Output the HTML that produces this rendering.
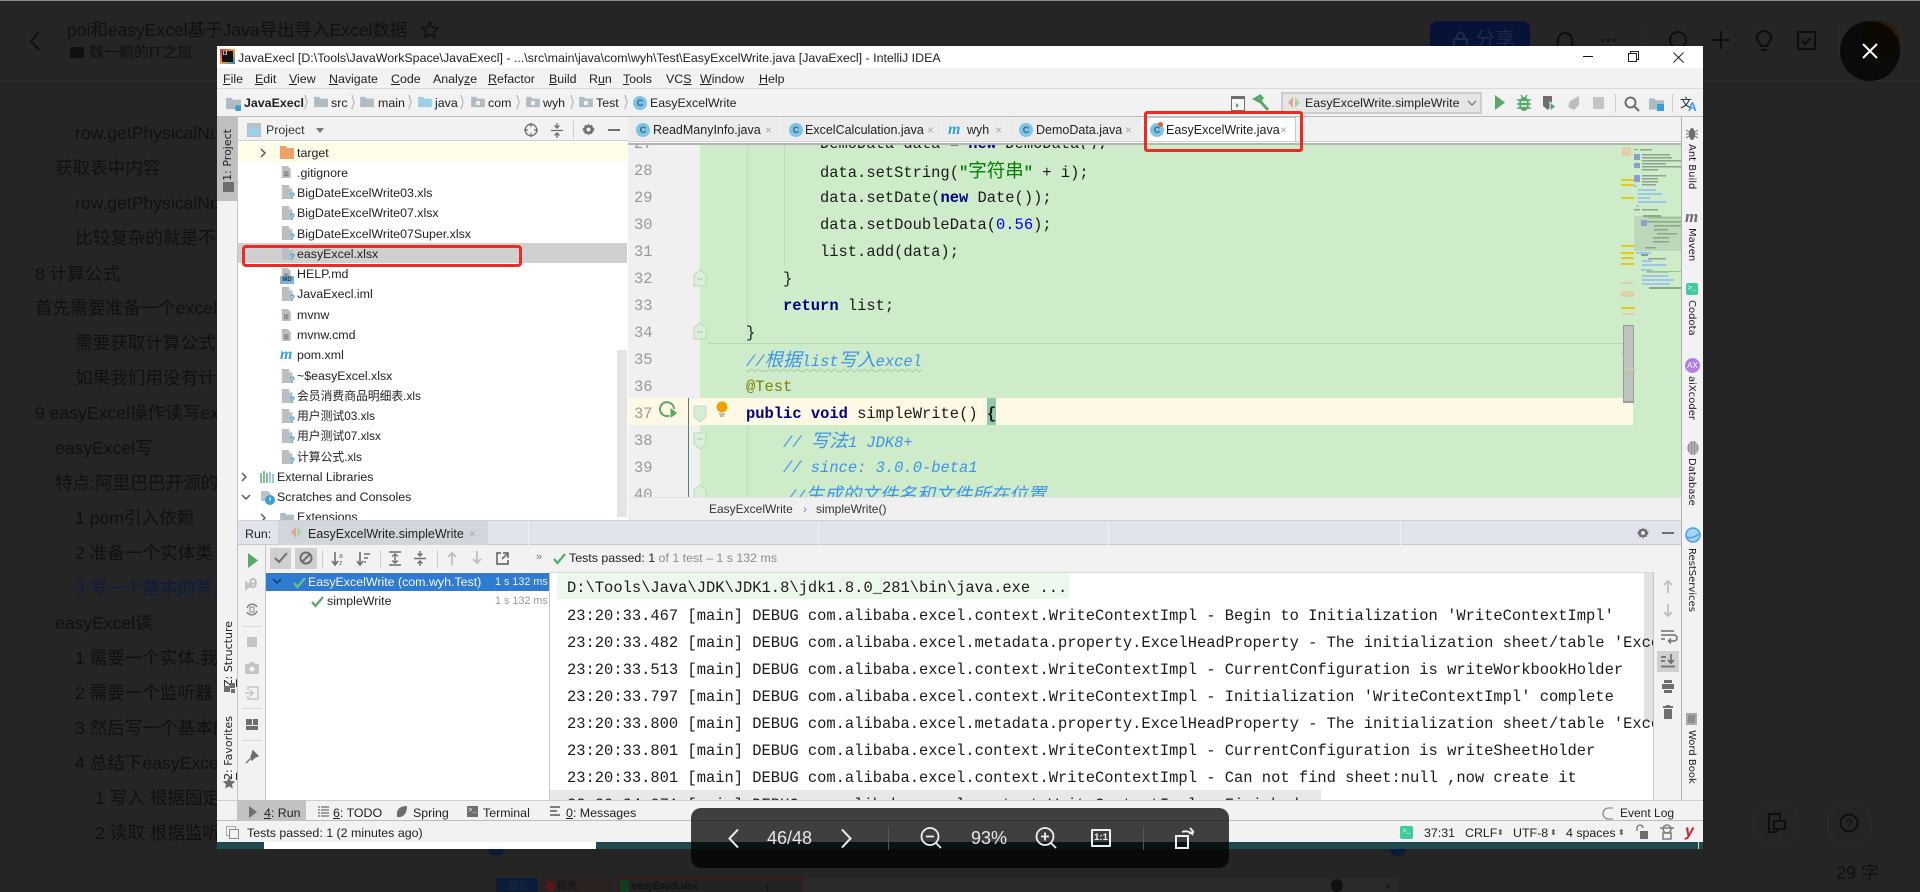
<!DOCTYPE html>
<html lang="zh"><head><meta charset="utf-8"><title>IntelliJ IDEA</title>
<style>
*{box-sizing:border-box;margin:0;padding:0}
html,body{width:1920px;height:892px;overflow:hidden;background:#252525}
body{position:relative;font-family:"Liberation Sans","Noto Sans CJK SC",sans-serif;filter:blur(.35px)}
.a,.b,.t,.m,.v,.r{position:absolute}
.t{white-space:nowrap;line-height:20px;font-size:12.4px;color:#222}
.m{white-space:pre;line-height:20px;font-size:15.45px;font-family:"Liberation Mono","Noto Sans CJK SC",monospace;color:#1a1a1a}
.n{position:absolute;left:634px;font-family:"Liberation Mono",monospace;font-size:15.45px;line-height:20px;color:#999}
.v{white-space:nowrap;writing-mode:vertical-rl;font-family:"DejaVu Sans",sans-serif;font-size:10px;color:#222;line-height:14px}
.r{transform:rotate(180deg);font-size:11px}
.bg{position:absolute;white-space:nowrap;font-size:17.6px;line-height:24px;color:#101010}
.k{color:#000080;font-weight:bold}.c{color:#3f94ea;font-style:italic}
.z{font-size:18.5px;font-family:"Noto Sans CJK SC",sans-serif;line-height:1;font-weight:normal}
u{text-decoration-thickness:1px;text-underline-offset:1px}
.x{font-size:12px;color:#aaa;font-family:"Liberation Sans",sans-serif}
.cl{position:absolute;width:14px;height:14px;border-radius:50%;background:#7cc4e8;color:#37617a;font:bold 9px/14px "Liberation Sans",sans-serif;text-align:center}
.sb{position:absolute;width:1px;background:#cfcfcf}
svg{overflow:visible}
</style></head><body>
<svg width="0" height="0" style="position:absolute"><defs>
<symbol id="f" viewBox="0 0 16 18"><path d="M1 1h8l4 4v12H1z" fill="#b9bfc4"/><path d="M9 1v4h4" fill="#e8e8e8"/><text x="10" y="17" font-size="10" font-weight="bold" fill="#389fd6" font-family="Liberation Sans">?</text></symbol>
<symbol id="d" viewBox="0 0 16 18"><path d="M1 1h8l4 4v12H1z" fill="#b9bfc4"/><path d="M4 9h6M4 11.500h6M4 14h6" stroke="#555" stroke-width="1"/></symbol>
<symbol id="fo" viewBox="0 0 16 14"><path d="M0 1h6l1 2h9v10H0z" fill="#b0bcc4"/></symbol>
<symbol id="g" viewBox="0 0 16 16"><path d="M8 1.500l1.300 2.200 2.500-.6.600 2.500 2.200 1.300-1.300 1.100 1.300 1.100-2.200 1.300-.6 2.500-2.500-.6L8 14.500l-1.300-2.200-2.500.6-.6-2.500-2.200-1.300L2.700 8 1.400 6.900l2.200-1.300.6-2.500 2.500.6z" fill="#6e6e6e"/><circle cx="8" cy="8" r="2.200" fill="#f2f2f2"/></symbol>
</defs></svg>

<!-- underlying page -->
<div class="b" style="left:0;top:0;width:1920px;height:1px;background:#8a8a8a"></div>
<div class="b" style="left:0;top:80px;width:1920px;height:1px;background:#2c2c2c"></div>
<svg class="a" style="left:28px;top:30px" width="14" height="22" viewBox="0 0 14 22"><path d="M11 2L3 11l8 9" fill="none" stroke="#101010" stroke-width="2"/></svg>
<div class="bg" style="left:67px;top:18px;font-size:17.5px">poi和easyExcel基于Java导出导入Excel数据</div>
<svg class="a" style="left:421px;top:21px" width="18" height="18" viewBox="0 0 18 18"><path d="M9 1l2.400 5.300 5.600.6-4.200 3.800 1.200 5.600L9 13.400l-5 2.900 1.200-5.600L1 6.900l5.600-.6z" fill="none" stroke="#101010" stroke-width="1.500"/></svg>
<div class="b" style="left:70px;top:47px;width:14px;height:11px;background:#101010;border-radius:1px"></div>
<div class="bg" style="left:89px;top:42px;font-size:15px;line-height:22px">魏一鹤的IT之旅</div>
<div class="b" style="left:1430px;top:21px;width:100px;height:40px;background:#061337;border-radius:8px"></div>
<div class="bg" style="left:1475px;top:28px;color:#1e2a47;font-size:20px">分享</div>
<svg class="a" style="left:1452px;top:32px" width="17" height="17" viewBox="0 0 17 17"><rect x="2" y="7" width="13" height="9" rx="1" fill="none" stroke="#1e2a47" stroke-width="2"/><path d="M5 7V4a3.500 3.500 0 017 0v3" fill="none" stroke="#1e2a47" stroke-width="2"/></svg>
<svg class="a" style="left:1553px;top:30px" width="24" height="20" viewBox="0 0 24 20"><path d="M3 18c2-2 2-5 2-8a7 7 0 0114 0c0 3 0 6 2 8z" fill="none" stroke="#0e0e0e" stroke-width="2"/></svg>
<div class="bg" style="left:1600px;top:28px;font-weight:bold">···</div>
<svg class="a" style="left:1668px;top:30px" width="20" height="20"><circle cx="10" cy="10" r="8" fill="none" stroke="#0e0e0e" stroke-width="2"/></svg>
<svg class="a" style="left:1711px;top:30px" width="20" height="20"><path d="M10 1v18M1 10h18" stroke="#0e0e0e" stroke-width="2"/></svg>
<svg class="a" style="left:1755px;top:30px" width="18" height="22" viewBox="0 0 18 22"><path d="M6 16c0-3-4-4-4-8a7 7 0 0114 0c0 4-4 5-4 8zM6 20h6" fill="none" stroke="#0e0e0e" stroke-width="2"/></svg>
<svg class="a" style="left:1797px;top:31px" width="20" height="20"><rect x="1" y="1" width="17" height="17" fill="none" stroke="#0e0e0e" stroke-width="2"/><path d="M5 10l3 3 6-6" fill="none" stroke="#0e0e0e" stroke-width="2"/></svg>
<div class="b" style="left:1645px;top:22px;width:1px;height:36px;background:#2c2c2c"></div>
<div class="b" style="left:1839px;top:22px;width:1px;height:36px;background:#2c2c2c"></div>
<div class="b" style="left:1861px;top:21px;width:39px;height:39px;border-radius:50%;background:#2a1c06"></div>

<div class="bg" style="left:75px;top:121px">row.getPhysicalNumberOfCells()</div>
<div class="bg" style="left:55px;top:156px">获取表中内容</div>
<div class="bg" style="left:75px;top:191px">row.getPhysicalNumberOfCells()</div>
<div class="bg" style="left:75px;top:226px">比较复杂的就是不同类型</div>
<div class="bg" style="left:35px;top:262px">8 计算公式</div>
<div class="bg" style="left:35px;top:296px">首先需要准备一个excel</div>
<div class="bg" style="left:75px;top:331px">需要获取计算公式的</div>
<div class="bg" style="left:75px;top:366px">如果我们用没有计算</div>
<div class="bg" style="left:35px;top:401px">9 easyExcel操作读写excel</div>
<div class="bg" style="left:55px;top:436px">easyExcel写</div>
<div class="bg" style="left:55px;top:471px">特点:阿里巴巴开源的</div>
<div class="bg" style="left:75px;top:506px">1 pom引入依赖</div>
<div class="bg" style="left:75px;top:541px">2 准备一个实体类</div>
<div class="bg" style="left:75px;top:576px;color:#0b1c40">3 写一个基本的写入</div>
<div class="bg" style="left:55px;top:611px">easyExcel读</div>
<div class="bg" style="left:75px;top:646px">1 需要一个实体,我们</div>
<div class="bg" style="left:75px;top:681px">2 需要一个监听器</div>
<div class="bg" style="left:75px;top:716px">3 然后写一个基本的</div>
<div class="bg" style="left:75px;top:751px">4 总结下easyExcel</div>
<div class="bg" style="left:95px;top:786px">1 写入 根据固定类</div>
<div class="bg" style="left:95px;top:821px">2 读取 根据监听器</div>

<div class="b" style="left:1754px;top:801px;width:45px;height:45px;border-radius:50%;border:1px solid #2c2c2c"></div>
<div class="b" style="left:1827px;top:801px;width:45px;height:45px;border-radius:50%;border:1px solid #2c2c2c"></div>
<svg class="a" style="left:1767px;top:812px" width="20" height="22" viewBox="0 0 20 22"><path d="M9 20H2V2h11v5" fill="none" stroke="#0e0e0e" stroke-width="2"/><path d="M7 9h11v8h-6l-2 2v-2H7z" fill="none" stroke="#0e0e0e" stroke-width="2"/></svg>
<svg class="a" style="left:1839px;top:813px" width="20" height="20"><circle cx="10" cy="10" r="8.500" fill="none" stroke="#0e0e0e" stroke-width="2"/><text x="10" y="15" font-size="13" text-anchor="middle" fill="#0e0e0e" font-family="Liberation Sans">?</text></svg>
<div class="bg" style="left:1836px;top:861px;font-size:18px">29 字</div>

<div class="b" style="left:496px;top:878px;width:42px;height:14px;background:#0c1c38"></div>
<div class="t" style="left:508px;top:877px;color:#1c2c48;font-size:10px">首页</div>
<div class="b" style="left:541px;top:878px;width:71px;height:14px;background:#2a2121"></div>
<div class="b" style="left:546px;top:881px;width:9px;height:10px;border-radius:50%;background:#5c1414"></div>
<div class="t" style="left:557px;top:877px;color:#141414;font-size:10px">稻壳</div>
<div class="b" style="left:616px;top:878px;width:187px;height:14px;border:1px solid #4e1414;border-bottom:0;background:#232323"></div>
<div class="b" style="left:620px;top:881px;width:9px;height:11px;background:#123e20"></div>
<div class="t" style="left:632px;top:877px;color:#0c0c0c;font-size:10px">easyExcel.xlsx</div>
<div class="t" style="left:764px;top:877px;color:#151515;font-size:12px">+</div>
<div class="b" style="left:803px;top:878px;width:595px;height:14px;background:#2a2a2a"></div>
<div class="b" style="left:1331px;top:879px;width:12px;height:13px;border-radius:50%;background:#111"></div>
<div class="t" style="left:1385px;top:877px;color:#111;font-size:11px">×</div>

<!-- IDE window -->
<div class="b" style="left:217px;top:46px;width:1486px;height:803px;background:#f2f2f2;overflow:hidden"></div>
<div class="b" style="left:217px;top:46px;width:1486px;height:22px;background:#fff"></div>
<div class="b" style="left:217px;top:88px;width:1486px;height:1px;background:#dcdcdc"></div>
<div class="b" style="left:217px;top:116px;width:1486px;height:1px;background:#bdbdbd"></div>

<!-- title -->
<div class="b" style="left:220px;top:49px;width:15px;height:15px;background:linear-gradient(135deg,#d8315a,#f5a623 50%,#1e88e5);"></div>
<div class="b" style="left:222px;top:51px;width:11px;height:11px;background:#111;color:#fff;font:bold 5px/6px 'Liberation Sans';padding-left:1px">IJ</div>
<div class="t" style="left:238px;top:48px;font-size:12.4px">JavaExecl [D:\Tools\JavaWorkSpace\JavaExecl] - ...\src\main\java\com\wyh\Test\EasyExcelWrite.java [JavaExecl] - IntelliJ IDEA</div>
<div class="b" style="left:1583px;top:56px;width:10px;height:1px;background:#111"></div>
<svg class="a" style="left:1628px;top:51px" width="11" height="11"><path d="M2.500 2.500V.5h8v8h-2M.5 2.500h8v8h-8z" fill="none" stroke="#222"/></svg>
<svg class="a" style="left:1673px;top:52px" width="11" height="11"><path d="M.5.5l10 10M10.500.5l-10 10" stroke="#222"/></svg>

<!-- menu -->
<div class="t" style="left:223px;top:69px"><u>F</u>ile</div>
<div class="t" style="left:255px;top:69px"><u>E</u>dit</div>
<div class="t" style="left:289px;top:69px"><u>V</u>iew</div>
<div class="t" style="left:329px;top:69px"><u>N</u>avigate</div>
<div class="t" style="left:391px;top:69px"><u>C</u>ode</div>
<div class="t" style="left:433px;top:69px">Analy<u>z</u>e</div>
<div class="t" style="left:488px;top:69px"><u>R</u>efactor</div>
<div class="t" style="left:549px;top:69px"><u>B</u>uild</div>
<div class="t" style="left:589px;top:69px">R<u>u</u>n</div>
<div class="t" style="left:623px;top:69px"><u>T</u>ools</div>
<div class="t" style="left:666px;top:69px">VC<u>S</u></div>
<div class="t" style="left:700px;top:69px"><u>W</u>indow</div>
<div class="t" style="left:759px;top:69px"><u>H</u>elp</div>

<!-- nav bar -->
<svg class="a" style="left:226px;top:96px" width="15" height="15" viewBox="0 0 16 16"><use href="#fo"/><rect x="10" y="10" width="6" height="6" fill="#389fd6"/></svg>
<div class="t" style="left:244px;top:93px;font-weight:bold">JavaExecl</div>
<div class="t" style="left:303px;top:93px;color:#bbb;font-size:16px">⟩</div>
<svg class="a" style="left:314px;top:96px" width="14" height="12"><use href="#fo"/></svg>
<div class="t" style="left:331px;top:93px">src</div>
<div class="t" style="left:350px;top:93px;color:#bbb;font-size:16px">⟩</div>
<svg class="a" style="left:360px;top:96px" width="14" height="12"><use href="#fo"/></svg>
<div class="t" style="left:378px;top:93px">main</div>
<div class="t" style="left:407px;top:93px;color:#bbb;font-size:16px">⟩</div>
<svg class="a" style="left:418px;top:96px" width="14" height="12" viewBox="0 0 16 14"><path d="M0 1h6l1 2h9v10H0z" fill="#9ccfe8"/></svg>
<div class="t" style="left:435px;top:93px">java</div>
<div class="t" style="left:459px;top:93px;color:#bbb;font-size:16px">⟩</div>
<svg class="a" style="left:471px;top:96px" width="14" height="12"><use href="#fo"/><rect x="5" y="5" width="4" height="4" fill="#f2f2f2"/></svg>
<div class="t" style="left:488px;top:93px">com</div>
<div class="t" style="left:515px;top:93px;color:#bbb;font-size:16px">⟩</div>
<svg class="a" style="left:526px;top:96px" width="14" height="12"><use href="#fo"/><rect x="5" y="5" width="4" height="4" fill="#f2f2f2"/></svg>
<div class="t" style="left:543px;top:93px">wyh</div>
<div class="t" style="left:569px;top:93px;color:#bbb;font-size:16px">⟩</div>
<svg class="a" style="left:579px;top:96px" width="14" height="12"><use href="#fo"/><rect x="5" y="5" width="4" height="4" fill="#f2f2f2"/></svg>
<div class="t" style="left:596px;top:93px">Test</div>
<div class="t" style="left:623px;top:93px;color:#bbb;font-size:16px">⟩</div>
<div class="cl" style="left:633px;top:96px">C</div>
<div class="t" style="left:650px;top:93px">EasyExcelWrite</div>

<svg class="a" style="left:1231px;top:96px" width="14" height="15"><rect x=".5" y=".5" width="13" height="14" fill="#f6f6f6" stroke="#6e6e6e"/><rect x="0" y="0" width="14" height="3" fill="#6e6e6e"/><path d="M5 7l3 2.500L5 12z" fill="#59a869"/></svg>
<svg class="a" style="left:1254px;top:95px" width="16" height="17" viewBox="0 0 16 17"><path d="M1 4l5-3 2 2-3 3zM6 6l8 9" fill="none" stroke="#59a869" stroke-width="3"/></svg>
<div class="b" style="left:1281px;top:92px;width:201px;height:22px;background:#e6e6e6;border:2px solid #cdcdcd"></div>
<div class="b" style="left:1288px;top:97px;width:5px;height:11px;background:#e8a090;clip-path:polygon(100% 0,0 50%,100% 100%)"></div>
<div class="b" style="left:1295px;top:97px;width:5px;height:11px;background:#a8d5a8;clip-path:polygon(0 0,100% 50%,0 100%)"></div>
<div class="t" style="left:1305px;top:93px">EasyExcelWrite.simpleWrite</div>
<svg class="a" style="left:1467px;top:100px" width="10" height="7"><path d="M1 1l4 4 4-4" fill="none" stroke="#6e6e6e" stroke-width="1.200"/></svg>
<svg class="a" style="left:1494px;top:94px" width="12" height="17"><path d="M1 1l10 7.500L1 16z" fill="#59a869"/></svg>
<svg class="a" style="left:1517px;top:94px" width="14" height="18" viewBox="0 0 14 18"><ellipse cx="7" cy="10" rx="5" ry="7" fill="#59a869"/><path d="M0 6h14M0 10h14M0 14h14M4 1l2 3M10 1L8 4" stroke="#59a869" stroke-width="1.500"/><path d="M4 8h6M4 12h6" stroke="#f2f2f2" stroke-width="1.500"/></svg>
<svg class="a" style="left:1542px;top:95px" width="15" height="17" viewBox="0 0 15 17"><path d="M1 1h9v8l-4 6-5-4z" fill="#6e6e6e"/><path d="M8 7l6 4.500L8 16z" fill="#59a869" stroke="#f2f2f2"/></svg>
<svg class="a" style="left:1567px;top:95px" width="14" height="16"><path d="M3 6l9-5v9l-5 5-6-3z" fill="#bdbdbd"/></svg>
<div class="b" style="left:1593px;top:97px;width:11px;height:12px;background:#c4c4c4"></div>
<div class="sb" style="left:1615px;top:94px;height:19px"></div>
<svg class="a" style="left:1624px;top:96px" width="16" height="16"><circle cx="6.500" cy="6.500" r="5" fill="none" stroke="#6e6e6e" stroke-width="2"/><path d="M10 10l5 5" stroke="#6e6e6e" stroke-width="2.200"/></svg>
<svg class="a" style="left:1649px;top:97px" width="15" height="14"><use href="#fo"/><rect x="8" y="7" width="7" height="7" fill="#389fd6"/></svg>
<div class="sb" style="left:1672px;top:94px;height:19px"></div>
<div class="t" style="left:1680px;top:93px;font-size:12px">文</div>
<div class="t" style="left:1688px;top:97px;color:#3d8fe8;font-size:12px;font-weight:bold">A</div>

<!-- left stripe -->
<div class="b" style="left:217px;top:117px;width:20px;height:84px;background:#bfbfbf"></div>
<div class="b" style="left:237px;top:117px;width:1px;height:683px;background:#c4c4c4"></div>
<div class="v r" style="left:221px;top:129px">1: Project</div>
<div class="b" style="left:223px;top:182px;width:11px;height:10px;background:#6e6e6e"></div>
<div class="v r" style="left:222px;top:621px"><u>Z</u>: Structure</div>
<div class="b" style="left:224px;top:686px;width:6px;height:6px;background:#6e6e6e"></div>
<div class="b" style="left:230px;top:683px;width:5px;height:5px;background:#6e6e6e"></div>
<div class="b" style="left:231px;top:689px;width:4px;height:4px;background:#6e6e6e"></div>
<div class="v r" style="left:222px;top:716px"><u>2</u>: Favorites</div>
<svg class="a" style="left:222px;top:776px" width="14" height="14" viewBox="0 0 18 18"><path d="M9 1l2.400 5.300 5.600.6-4.200 3.800 1.200 5.600L9 13.400l-5 2.900 1.200-5.600L1 6.900l5.600-.6z" fill="#6e6e6e"/></svg>

<!-- project panel -->
<div class="b" style="left:238px;top:117px;width:390px;height:404px;background:#fff;overflow:hidden"></div>
<div class="b" style="left:238px;top:117px;width:390px;height:24px;background:#f2f2f2;border-bottom:1px solid #d0d0d0"></div>
<svg class="a" style="left:247px;top:123px" width="14" height="14"><rect x=".5" y=".5" width="13" height="13" fill="#9ccfe8" stroke="#bdbdbd"/><rect x="1" y="1" width="12" height="3" fill="#bdbdbd"/></svg>
<div class="t" style="left:266px;top:120px;font-size:12.4px;color:#333">Project</div>
<div class="b" style="left:316px;top:128px;width:8px;height:5px;background:#777;clip-path:polygon(0 0,100% 0,50% 100%)"></div>
<svg class="a" style="left:524px;top:123px" width="14" height="14"><circle cx="7" cy="7" r="5.800" fill="none" stroke="#6e6e6e" stroke-width="1.300"/><path d="M7 0v4M7 10v4M0 7h4M10 7h4" stroke="#6e6e6e" stroke-width="1.300"/></svg>
<svg class="a" style="left:551px;top:123px" width="12" height="15"><path d="M0 7.500h12M6 0v5M3.500 2.500L6 5l2.500-2.500M6 15v-5M3.500 12.500L6 10l2.500 2.500" fill="none" stroke="#6e6e6e" stroke-width="1.300"/></svg>
<div class="sb" style="left:573px;top:121px;height:17px"></div>
<svg class="a" style="left:581px;top:122px" width="15" height="15"><use href="#g"/></svg>
<div class="b" style="left:608px;top:129px;width:12px;height:2px;background:#6e6e6e"></div>

<div class="b" style="left:238px;top:142px;width:389px;height:20px;background:#fdfde8"></div>
<div class="b" style="left:238px;top:243px;width:389px;height:20px;background:#d0d0d0"></div>
<svg class="a" style="left:260px;top:148px" width="7" height="10"><path d="M1 1l4 4-4 4" fill="none" stroke="#555" stroke-width="1.400"/></svg>
<svg class="a" style="left:280px;top:146px" width="14" height="13"><path d="M0 0h6l1 2h7v11H0z" fill="#eda26a"/></svg>
<div class="t" style="left:297px;top:143px">target</div>
<svg class="a" style="left:281px;top:164px" width="12" height="16"><use href="#d"/></svg><div class="t" style="left:297px;top:163px">.gitignore</div>
<svg class="a" style="left:281px;top:184px" width="14" height="16"><use href="#f"/></svg><div class="t" style="left:297px;top:183px">BigDateExcelWrite03.xls</div>
<svg class="a" style="left:281px;top:205px" width="14" height="16"><use href="#f"/></svg><div class="t" style="left:297px;top:203px">BigDateExcelWrite07.xlsx</div>
<svg class="a" style="left:281px;top:225px" width="14" height="16"><use href="#f"/></svg><div class="t" style="left:297px;top:224px">BigDateExcelWrite07Super.xlsx</div>
<svg class="a" style="left:281px;top:245px" width="14" height="16"><use href="#f"/></svg><div class="t" style="left:297px;top:244px">easyExcel.xlsx</div>
<svg class="a" style="left:281px;top:266px" width="12" height="16"><use href="#d"/></svg><div class="b" style="left:280px;top:276px;width:14px;height:8px;background:#7fb2d4;color:#234;font:bold 6px/8px 'Liberation Sans';text-align:center">MD</div><div class="t" style="left:297px;top:264px">HELP.md</div>
<svg class="a" style="left:281px;top:286px" width="14" height="16"><use href="#f"/></svg><div class="t" style="left:297px;top:284px">JavaExecl.iml</div>
<svg class="a" style="left:281px;top:307px" width="12" height="16"><use href="#d"/></svg><div class="t" style="left:297px;top:305px">mvnw</div>
<svg class="a" style="left:281px;top:327px" width="12" height="16"><use href="#d"/></svg><div class="t" style="left:297px;top:325px">mvnw.cmd</div>
<div class="t" style="left:280px;top:345px;color:#389fd6;font-style:italic;font-weight:bold;font-size:16px;font-family:'Liberation Serif',serif">m</div><div class="t" style="left:297px;top:345px">pom.xml</div>
<svg class="a" style="left:281px;top:368px" width="14" height="16"><use href="#f"/></svg><div class="t" style="left:297px;top:366px">~$easyExcel.xlsx</div>
<svg class="a" style="left:281px;top:388px" width="14" height="16"><use href="#f"/></svg><div class="t" style="left:297px;top:386px;font-size:11.8px">会员消费商品明细表.xls</div>
<svg class="a" style="left:281px;top:408px" width="14" height="16"><use href="#f"/></svg><div class="t" style="left:297px;top:406px;font-size:11.8px">用户测试03.xls</div>
<svg class="a" style="left:281px;top:428px" width="14" height="16"><use href="#f"/></svg><div class="t" style="left:297px;top:426px;font-size:11.8px">用户测试07.xlsx</div>
<svg class="a" style="left:281px;top:449px" width="14" height="16"><use href="#f"/></svg><div class="t" style="left:297px;top:447px;font-size:11.8px">计算公式.xls</div>
<svg class="a" style="left:241px;top:472px" width="7" height="10"><path d="M1 1l4 4-4 4" fill="none" stroke="#555" stroke-width="1.400"/></svg>
<svg class="a" style="left:260px;top:470px" width="14" height="14"><path d="M1 3v10M4 1v12M7 3v10" stroke="#59a869" stroke-width="1.500"/><path d="M10 2v11M13 4v9" stroke="#7cb8d8" stroke-width="1.500"/></svg>
<div class="t" style="left:277px;top:467px">External Libraries</div>
<svg class="a" style="left:241px;top:494px" width="10" height="7"><path d="M1 1l4 4 4-4" fill="none" stroke="#555" stroke-width="1.400"/></svg>
<svg class="a" style="left:260px;top:490px" width="15" height="15"><path d="M1 1h7l3 3v7H1z" fill="#bcc2c6"/><circle cx="10" cy="10" r="5" fill="#389fd6"/><path d="M10 7v4" stroke="#fff"/></svg>
<div class="t" style="left:277px;top:487px">Scratches and Consoles</div>
<div class="b" style="left:238px;top:512px;width:389px;height:9px;overflow:hidden"><div class="t" style="left:59px;top:-5px">Extensions</div><svg class="a" style="left:22px;top:1px" width="7" height="10"><path d="M1 1l4 4-4 4" fill="none" stroke="#555" stroke-width="1.400"/></svg><svg class="a" style="left:42px;top:0" width="14" height="12"><use href="#fo"/></svg></div>
<div class="b" style="left:617px;top:350px;width:10px;height:167px;background:#e4e4e4"></div>

<!-- editor tabs -->
<div class="b" style="left:628px;top:117px;width:1053px;height:24px;background:#f2f2f2"></div>
<div class="b" style="left:628px;top:117px;width:152px;height:23px;background:#ececec"></div>
<div class="b" style="left:781px;top:117px;width:160px;height:23px;background:#ececec"></div>
<div class="b" style="left:942px;top:117px;width:67px;height:23px;background:#ececec"></div>
<div class="b" style="left:1010px;top:117px;width:130px;height:23px;background:#ececec"></div>
<div class="b" style="left:1144px;top:117px;width:152px;height:24px;background:#fff;border:1px solid #c8c8c8;border-bottom:0"></div>
<div class="b" style="left:628px;top:141px;width:1053px;height:4px;background:#fafafa;border-top:1px solid #cfcfcf;border-bottom:2px solid #b4b4b4"></div>
<div class="cl" style="left:636px;top:123px">C</div><div class="t" style="left:653px;top:120px;font-size:12.5px">ReadManyInfo.java</div><div class="t x" style="left:765px;top:120px">×</div>
<div class="cl" style="left:789px;top:123px">C</div><div class="t" style="left:805px;top:120px;font-size:12.5px">ExcelCalculation.java</div><div class="t x" style="left:927px;top:120px">×</div>
<div class="t" style="left:948px;top:120px;color:#389fd6;font-style:italic;font-weight:bold;font-size:16px;font-family:'Liberation Serif',serif">m</div><div class="t" style="left:967px;top:120px;font-size:12.5px">wyh</div><div class="t x" style="left:995px;top:120px">×</div>
<div class="cl" style="left:1019px;top:123px">C</div><div class="t" style="left:1036px;top:120px;font-size:12.5px">DemoData.java</div><div class="t x" style="left:1125px;top:120px">×</div>
<div class="cl" style="left:1150px;top:123px">C</div><div class="b" style="left:1158px;top:122px;width:5px;height:5px;border-radius:50%;background:#d9683c"></div><div class="t" style="left:1166px;top:120px;font-size:12.5px">EasyExcelWrite.java</div><div class="t x" style="left:1280px;top:120px">×</div>

<!-- editor -->
<div class="b" id="ed" style="left:628px;top:145px;width:1053px;height:352px;background:#ceebca;overflow:hidden">
<div class="b" style="left:0;top:0;width:72px;height:352px;background:#f0f0f0"></div>
<div class="b" style="left:0;top:253px;width:1005px;height:27px;background:#fef9e4"></div>
<div class="b" style="left:359px;top:253px;width:9px;height:27px;background:#93c7b0"></div>
<div class="b" style="left:80px;top:198px;width:925px;height:1px;background:#b8d4b5"></div>
<div class="b" style="left:60px;top:253px;width:1px;height:99px;background:#4f8273"></div>
<div class="b" style="left:119px;top:0;width:1px;height:190px;background:#bfddbc"></div>
<div class="b" style="left:119px;top:280px;width:1px;height:72px;background:#bfddbc"></div>
<div class="b" style="left:156px;top:0;width:1px;height:120px;background:#bfddbc"></div>
</div>
<!-- fold marks -->
<svg class="a" style="left:693px;top:269px" width="15" height="18"><path d="M1 6l6-5 6 5v11H1z" fill="#dbf0d8" stroke="#bcd8b9"/><path d="M4 10h6" stroke="#a8c4a6"/></svg>
<svg class="a" style="left:693px;top:322px" width="15" height="18"><path d="M1 6l6-5 6 5v11H1z" fill="#dbf0d8" stroke="#bcd8b9"/><path d="M4 10h6" stroke="#a8c4a6"/></svg>
<svg class="a" style="left:693px;top:405px" width="15" height="18"><path d="M1 1h12v11l-6 5-6-5z" fill="#d6ecd3" stroke="#c4dcc2"/></svg>
<svg class="a" style="left:693px;top:432px" width="15" height="18"><path d="M1 1h12v11l-6 5-6-5z" fill="#dbf0d8" stroke="#bcd8b9"/><path d="M4 7h6" stroke="#a8c4a6"/></svg>
<svg class="a" style="left:693px;top:484px" width="15" height="13"><path d="M1 6l6-5 6 5v8H1z" fill="#dbf0d8" stroke="#bcd8b9"/></svg>
<!-- line numbers -->
<div class="n" style="top:161px">28</div><div class="n" style="top:188px">29</div><div class="n" style="top:215px">30</div><div class="n" style="top:242px">31</div><div class="n" style="top:269px">32</div><div class="n" style="top:296px">33</div><div class="n" style="top:323px">34</div><div class="n" style="top:350px">35</div><div class="n" style="top:377px">36</div><div class="n" style="top:404px">37</div><div class="n" style="top:431px">38</div><div class="n" style="top:458px">39</div>
<div class="b" style="left:628px;top:145px;width:60px;height:4px;overflow:hidden"><div class="n" style="left:6px;top:-11px">27</div></div>
<div class="b" style="left:628px;top:485px;width:60px;height:12px;overflow:hidden"><div class="n" style="left:6px;top:0">40</div></div>
<!-- code -->
<div class="b" style="left:820px;top:145px;width:400px;height:4px;overflow:hidden"><div class="m" style="left:0;top:-11px">DemoData data = <span class="k">new</span> DemoData();</div></div>
<div class="m" style="left:820px;top:161px">data.setString(<span style="color:#008000;font-weight:bold">"<span class="z">字符串</span>"</span> + i);</div>
<div class="m" style="left:820px;top:188px">data.setDate(<span class="k">new</span> Date());</div>
<div class="m" style="left:820px;top:215px">data.setDoubleData(<span style="color:#0000ff">0.56</span>);</div>
<div class="m" style="left:820px;top:242px">list.add(data);</div>
<div class="m" style="left:783px;top:269px">}</div>
<div class="m" style="left:783px;top:296px"><span class="k">return</span> list;</div>
<div class="m" style="left:746px;top:323px">}</div>
<div class="m c" style="left:746px;top:350px;text-decoration:underline wavy #a9c9a6 1px;text-underline-offset:2px">//<span class="z">根据</span>list<span class="z">写入</span>excel</div>
<div class="m" style="left:746px;top:377px;color:#808000">@Test</div>
<div class="m" style="left:746px;top:404px"><span class="k">public void</span> simpleWrite() <span style="font-weight:bold">{</span></div>
<div class="m c" style="left:783px;top:431px">// <span class="z">写法</span>1 JDK8+</div>
<div class="m c" style="left:783px;top:458px">// since: 3.0.0-beta1</div>
<div class="b" style="left:780px;top:485px;width:400px;height:12px;overflow:hidden"><div class="m c" style="left:7px;top:0">//<span class="z">生成的文件名和文件所在位置</span></div></div>
<!-- run gutter -->
<svg class="a" style="left:658px;top:399px" width="22" height="22" viewBox="0 0 22 22"><path d="M14 15a7 7 0 112-5" fill="none" stroke="#59a869" stroke-width="2"/><path d="M12 8l8 6-8 6z" fill="#59a869" stroke="#fef9e4"/></svg>
<svg class="a" style="left:716px;top:401px" width="12" height="16" viewBox="0 0 12 16"><circle cx="6" cy="6" r="5.500" fill="#eda200"/><path d="M3 13h6M4 15h4" stroke="#999" stroke-width="1.300"/></svg>
<!-- minimap & stripes -->
<svg class="a" style="left:1621px;top:145px" width="60" height="352" viewBox="0 0 60 352">
<rect x="1" y="2" width="9" height="9" fill="#e2cfaa"/>
<rect x="13" y="71" width="48" height="35" fill="#bcd8b8"/>
<g fill="#e4cc10"><rect y="34" width="13" height="2"/><rect y="39" width="13" height="2"/><rect y="52" width="13" height="2"/><rect y="100" width="13" height="2"/><rect y="107" width="13" height="2"/><rect y="112" width="13" height="2"/><rect y="118" width="13" height="2"/><rect y="162" width="13" height="2"/></g>
<g fill="#e0d0aa"><rect y="137" width="13" height="2"/><rect y="146" width="13" height="6"/><rect y="207" width="13" height="2"/></g>
<g fill="#8ea38c"><rect x="13" y="4" width="4" height="1"/><rect x="19" y="4" width="12" height="1.500"/><rect x="21" y="9" width="28" height="1.500"/><rect x="21" y="12" width="30" height="1.500"/><rect x="21" y="15" width="40" height="1.500"/><rect x="21" y="18" width="24" height="1.500"/><rect x="21" y="21" width="40" height="1.500"/><rect x="21" y="24" width="16" height="1.500"/><rect x="21" y="30" width="24" height="1.500"/><rect x="21" y="33" width="16" height="1.500"/><rect x="21" y="36" width="16" height="1.500"/><rect x="21" y="39" width="14" height="1.500"/><rect x="21" y="64" width="16" height="1.500"/><rect x="13" y="64" width="6" height="1.500"/><rect x="22" y="70" width="18" height="2"/><rect x="25" y="76" width="38" height="1.500"/><rect x="33" y="80" width="28" height="1.500"/><rect x="33" y="84" width="14" height="1.500"/><rect x="36" y="88" width="20" height="1.500"/><rect x="32" y="92" width="16" height="1.500"/><rect x="32" y="96" width="16" height="1.500"/><rect x="24" y="102" width="11" height="1.500"/><rect x="20" y="109" width="7" height="2"/><rect x="27" y="113" width="18" height="1.500"/><rect x="26" y="126" width="22" height="1.500"/><rect x="28" y="142" width="34" height="2"/></g>
<g fill="#8ba0c8"><rect x="13" y="9" width="6" height="6"/><rect x="13" y="18" width="6" height="5"/><rect x="13" y="30" width="6" height="7"/><rect x="20" y="75" width="6" height="6"/></g>
<g fill="#9cc6ec"><rect x="13" y="40" width="3" height="2"/><rect x="17" y="44" width="10" height="2"/><rect x="27" y="44" width="8" height="2"/><rect x="17" y="48" width="24" height="2"/><rect x="17" y="52" width="12" height="2"/><rect x="17" y="56" width="28" height="2"/><rect x="15" y="60" width="3" height="2"/><rect x="15" y="107" width="15" height="2"/><rect x="21" y="115" width="10" height="2"/><rect x="21" y="119" width="24" height="2"/><rect x="20" y="124" width="12" height="2"/><rect x="21" y="130" width="26" height="2"/><rect x="21" y="134" width="32" height="2"/><rect x="21" y="138" width="28" height="2"/></g>
<rect x="28" y="72" width="34" height="1.500" fill="#8fc98a"/><rect x="28" y="126" width="34" height="1" fill="#8fc98a"/>
</svg>
<div class="b" style="left:1623px;top:325px;width:11px;height:78px;background:#bcc4bb;border:1px solid #9c9c9c;border-bottom:2px solid #9c9c9c"></div>
<div class="b" style="left:1622px;top:307px;width:13px;height:2px;background:#e4cc10"></div>
<div class="b" style="left:1622px;top:313px;width:13px;height:2px;background:#e0d0aa"></div>
<div class="b" style="left:1624px;top:368px;width:11px;height:2px;background:#d0c8a8"></div>

<!-- breadcrumbs -->
<div class="b" style="left:628px;top:497px;width:1053px;height:23px;background:#f0f0f0;border-top:1px solid #e4e4e4"></div>
<div class="t" style="left:709px;top:499px;font-size:12px;color:#333">EasyExcelWrite</div>
<div class="t" style="left:803px;top:499px;font-size:12px;color:#888">›</div>
<div class="t" style="left:816px;top:499px;font-size:12px;color:#333">simpleWrite()</div>

<!-- run header -->
<div class="b" style="left:238px;top:520px;width:1443px;height:25px;background:#e1e4ec;border-top:1px solid #d0d2d8;border-bottom:1px solid #c8c8c8"></div>
<div class="b" style="left:278px;top:521px;width:210px;height:24px;background:#d2d5dc"></div>
<div class="b" style="left:528px;top:521px;width:1px;height:24px;background:#eef0f4"></div>
<div class="b" style="left:818px;top:521px;width:1px;height:24px;background:#eef0f4"></div>
<div class="b" style="left:1108px;top:521px;width:1px;height:24px;background:#eef0f4"></div>
<div class="b" style="left:1400px;top:521px;width:1px;height:24px;background:#eef0f4"></div>
<div class="t" style="left:245px;top:524px;font-size:12.4px">Run:</div>
<div class="b" style="left:291px;top:527px;width:5px;height:11px;background:#e8a090;clip-path:polygon(100% 0,0 50%,100% 100%)"></div>
<div class="b" style="left:297px;top:527px;width:5px;height:11px;background:#a8d5a8;clip-path:polygon(0 0,100% 50%,0 100%)"></div>
<div class="t" style="left:308px;top:524px;font-size:12.5px">EasyExcelWrite.simpleWrite</div>
<div class="t x" style="left:469px;top:524px">×</div>
<svg class="a" style="left:1636px;top:526px" width="14" height="14"><use href="#g"/></svg>
<div class="b" style="left:1662px;top:532px;width:12px;height:2px;background:#6e6e6e"></div>

<!-- run toolbar -->
<div class="b" style="left:238px;top:545px;width:1443px;height:27px;background:#f2f2f2"></div>
<div class="b" style="left:265px;top:545px;width:1px;height:255px;background:#c4c4c4"></div>
<svg class="a" style="left:248px;top:553px" width="11" height="15"><path d="M0 0l10 7.500L0 15z" fill="#59a869"/></svg>
<div class="b" style="left:270px;top:548px;width:21px;height:21px;background:#d0d0d0"></div>
<div class="b" style="left:295px;top:548px;width:22px;height:21px;background:#d0d0d0"></div>
<svg class="a" style="left:274px;top:552px" width="14" height="12"><path d="M1 6l4 4 8-9" fill="none" stroke="#6e6e6e" stroke-width="2"/></svg>
<svg class="a" style="left:299px;top:551px" width="14" height="14"><circle cx="7" cy="7" r="5.500" fill="none" stroke="#6e6e6e" stroke-width="2"/><path d="M3 11l8-8" stroke="#6e6e6e" stroke-width="2"/></svg>
<div class="sb" style="left:322px;top:550px;height:18px"></div>
<svg class="a" style="left:331px;top:551px" width="14" height="15"><path d="M4 1v13M1 10l3 4 3-4" fill="none" stroke="#6e6e6e" stroke-width="1.600"/><text x="8" y="7" font-size="7" fill="#6e6e6e" font-family="Liberation Sans">a</text><text x="8" y="14" font-size="7" fill="#6e6e6e" font-family="Liberation Sans">z</text></svg>
<svg class="a" style="left:356px;top:551px" width="14" height="15"><path d="M4 1v13M1 10l3 4 3-4" fill="none" stroke="#6e6e6e" stroke-width="1.600"/><path d="M8 3h6M8 7h4M8 11h2" stroke="#6e6e6e" stroke-width="1.600"/></svg>
<div class="sb" style="left:380px;top:550px;height:18px"></div>
<svg class="a" style="left:389px;top:551px" width="12" height="15"><path d="M0 1h12M0 14h12M6 3v9M3 5.500L6 3l3 2.500M3 9.500L6 12l3-2.500" fill="none" stroke="#6e6e6e" stroke-width="1.400"/></svg>
<svg class="a" style="left:414px;top:551px" width="12" height="15"><path d="M0 7.500h12M6 0v5M3.500 2.500L6 5l2.500-2.500M6 15v-5M3.500 12.500L6 10l2.500 2.500" fill="none" stroke="#6e6e6e" stroke-width="1.400"/></svg>
<div class="sb" style="left:437px;top:550px;height:18px"></div>
<svg class="a" style="left:447px;top:551px" width="10" height="14"><path d="M5 14V2M1 6l4-4 4 4" fill="none" stroke="#bdbdbd" stroke-width="1.700"/></svg>
<svg class="a" style="left:472px;top:551px" width="10" height="14"><path d="M5 0v12M1 8l4 4 4-4" fill="none" stroke="#bdbdbd" stroke-width="1.700"/></svg>
<svg class="a" style="left:496px;top:552px" width="13" height="13"><path d="M5 1H1v11h11V8M6 7l6-6M7 1h5v5" fill="none" stroke="#6e6e6e" stroke-width="1.700"/></svg>
<div class="t" style="left:536px;top:547px;font-size:11px;color:#777">»</div>
<svg class="a" style="left:553px;top:553px" width="13" height="11"><path d="M1 6l3.500 4L12 1" fill="none" stroke="#59a869" stroke-width="2.200"/></svg>
<div class="t" style="left:569px;top:548px;font-size:12.4px">Tests passed: 1 <span style="color:#8c8c8c">of 1 test – 1 s 132 ms</span></div>

<!-- run left toolbar -->
<div class="b" style="left:238px;top:572px;width:27px;height:228px;background:#f2f2f2"></div>
<svg class="a" style="left:245px;top:579px" width="9" height="12"><path d="M0 2l8 4-8 6z" fill="#c4c4c4"/></svg>
<div class="t" style="left:249px;top:574px;color:#bbb;font-weight:bold;font-size:15px">9</div>
<svg class="a" style="left:245px;top:602px" width="14" height="15"><path d="M2 6a5.500 5.500 0 0110-1M12 9a5.500 5.500 0 01-10 1" fill="none" stroke="#8a8a8a" stroke-width="1.600"/><rect x="5" y="5" width="4" height="5" fill="none" stroke="#8a8a8a"/></svg>
<div class="b" style="left:243px;top:626px;width:18px;height:1px;background:#d8d8d8"></div>
<div class="b" style="left:247px;top:637px;width:10px;height:10px;background:#c4c4c4"></div>
<svg class="a" style="left:245px;top:661px" width="14" height="13"><path d="M0 3h4l1-2h4l1 2h4v10H0z" fill="#c4c4c4"/><circle cx="7" cy="8" r="2.500" fill="#f2f2f2"/></svg>
<svg class="a" style="left:245px;top:686px" width="14" height="14"><path d="M3 4V1h10v12H3v-3M0 7h8M5 4l3 3-3 3" fill="none" stroke="#c4c4c4" stroke-width="1.500"/></svg>
<div class="b" style="left:243px;top:708px;width:18px;height:1px;background:#d8d8d8"></div>
<div class="b" style="left:246px;top:719px;width:6px;height:6px;background:#6e6e6e"></div><div class="b" style="left:253px;top:719px;width:5px;height:6px;background:#6e6e6e"></div><div class="b" style="left:246px;top:726px;width:12px;height:4px;background:#6e6e6e"></div>
<div class="b" style="left:243px;top:740px;width:18px;height:1px;background:#d8d8d8"></div>
<svg class="a" style="left:245px;top:750px" width="14" height="14"><path d="M8 1l5 5-3 1-3 3-1-3zM5.500 8.500L1 13" fill="#6e6e6e" stroke="#6e6e6e" stroke-width="1.300"/></svg>

<!-- tree -->
<div class="b" style="left:266px;top:572px;width:284px;height:228px;background:#fff;border-right:1px solid #c4c4c4"></div>
<div class="b" style="left:266px;top:573px;width:283px;height:18px;background:#2f7bd0"></div>
<svg class="a" style="left:272px;top:578px" width="10" height="7"><path d="M1 1l4 4 4-4" fill="none" stroke="#173a66" stroke-width="1.500"/></svg>
<svg class="a" style="left:293px;top:577px" width="13" height="11"><path d="M1 6l3.500 4L12 1" fill="none" stroke="#6cc08a" stroke-width="2.200"/></svg>
<div class="t" style="left:308px;top:572px;color:#f4f8fc;font-size:12.4px">EasyExcelWrite (com.wyh.Test)</div>
<div class="t" style="left:495px;top:572px;color:#e8eef6;font-size:10.8px">1 s 132 ms</div>
<svg class="a" style="left:311px;top:596px" width="13" height="11"><path d="M1 6l3.500 4L12 1" fill="none" stroke="#59a869" stroke-width="2.200"/></svg>
<div class="t" style="left:327px;top:591px;font-size:12.4px">simpleWrite</div>
<div class="t" style="left:495px;top:591px;color:#9a9a9a;font-size:10.8px">1 s 132 ms</div>

<!-- console -->
<div class="b" style="left:550px;top:572px;width:1103px;height:228px;background:#fff;overflow:hidden;border-top:1px solid #d8d8d8">
<div class="b" style="left:7px;top:0;width:512px;height:26px;background:#edf8ec"></div>
<div class="b" style="left:1094px;top:0;width:9px;height:150px;background:#e2e2e2"></div>
<div class="b" style="left:0;top:217px;width:771px;height:11px;background:#e8e8e8"></div>
<div class="m" style="left:17px;top:5px">D:\Tools\Java\JDK\JDK1.8\jdk1.8.0_281\bin\java.exe ...</div>
<div class="m" style="left:17px;top:33px">23:20:33.467 [main] DEBUG com.alibaba.excel.context.WriteContextImpl - Begin to Initialization 'WriteContextImpl'</div>
<div class="m" style="left:17px;top:60px">23:20:33.482 [main] DEBUG com.alibaba.excel.metadata.property.ExcelHeadProperty - The initialization sheet/table 'ExcelHeadProperty'</div>
<div class="m" style="left:17px;top:87px">23:20:33.513 [main] DEBUG com.alibaba.excel.context.WriteContextImpl - CurrentConfiguration is writeWorkbookHolder</div>
<div class="m" style="left:17px;top:114px">23:20:33.797 [main] DEBUG com.alibaba.excel.context.WriteContextImpl - Initialization 'WriteContextImpl' complete</div>
<div class="m" style="left:17px;top:141px">23:20:33.800 [main] DEBUG com.alibaba.excel.metadata.property.ExcelHeadProperty - The initialization sheet/table 'ExcelHeadProperty'</div>
<div class="m" style="left:17px;top:168px">23:20:33.801 [main] DEBUG com.alibaba.excel.context.WriteContextImpl - CurrentConfiguration is writeSheetHolder</div>
<div class="m" style="left:17px;top:195px">23:20:33.801 [main] DEBUG com.alibaba.excel.context.WriteContextImpl - Can not find sheet:null ,now create it</div>
<div class="m" style="left:17px;top:222px">23:20:34.071 [main] DEBUG com.alibaba.excel.context.WriteContextImpl - Finished</div>
</div>
<div class="b" style="left:1653px;top:572px;width:28px;height:228px;background:#f2f2f2;border-left:1px solid #c8c8c8"></div>
<svg class="a" style="left:1663px;top:579px" width="10" height="14"><path d="M5 14V2M1 6l4-4 4 4" fill="none" stroke="#bdbdbd" stroke-width="1.700"/></svg>
<svg class="a" style="left:1663px;top:604px" width="10" height="14"><path d="M5 0v12M1 8l4 4 4-4" fill="none" stroke="#bdbdbd" stroke-width="1.700"/></svg>
<svg class="a" style="left:1661px;top:630px" width="14" height="14"><path d="M0 1h13M0 5h13a3 3 0 010 6H8M10 8.500L7.500 11l2.500 2.500M0 9h4" fill="none" stroke="#6e6e6e" stroke-width="1.500"/></svg>
<div class="b" style="left:1657px;top:651px;width:22px;height:21px;background:#d0d0d0"></div>
<svg class="a" style="left:1661px;top:654px" width="14" height="15"><path d="M10 0v9M7 6l3 3 3-3M0 12.500h14M0 3h5M0 7h4" fill="none" stroke="#6e6e6e" stroke-width="1.700"/></svg>
<svg class="a" style="left:1662px;top:680px" width="12" height="13"><rect x="2" y="0" width="8" height="3" fill="#6e6e6e"/><rect x="0" y="4" width="12" height="5" fill="#6e6e6e"/><rect x="2" y="10" width="8" height="3" fill="#6e6e6e"/></svg>
<svg class="a" style="left:1663px;top:705px" width="10" height="14"><rect x="0" y="1" width="10" height="2" fill="#6e6e6e"/><rect x="3" y="0" width="4" height="2" fill="#6e6e6e"/><rect x="1" y="4" width="8" height="10" fill="#6e6e6e"/></svg>

<!-- right stripe -->
<div class="b" style="left:1681px;top:117px;width:1px;height:683px;background:#b0b0b0"></div>
<div class="b" style="left:1682px;top:117px;width:21px;height:683px;background:#f2f2f2"></div>
<svg class="a" style="left:1686px;top:127px" width="12" height="14"><ellipse cx="6" cy="7" rx="3" ry="6" fill="#6e6e6e"/><path d="M0 3l12 8M12 3L0 11M0 7h12" stroke="#6e6e6e"/></svg>
<div class="v" style="left:1684px;top:144px">Ant Build</div>
<div class="t" style="left:1685px;top:207px;font-size:17px;color:#6e6e6e;font-style:italic;font-weight:bold;font-family:'Liberation Serif',serif">m</div>
<div class="v" style="left:1684px;top:228px">Maven</div>
<div class="b" style="left:1686px;top:283px;width:12px;height:12px;border-radius:2px;background:#3fcda0;color:#fff;font:7px/12px 'Liberation Mono';text-align:center">&gt;_</div>
<div class="v" style="left:1684px;top:300px">Codota</div>
<div class="b" style="left:1685px;top:358px;width:15px;height:15px;border-radius:50%;background:#b07fe0;color:#fff;font:8px/15px 'Liberation Sans';text-align:center">AX</div>
<div class="v" style="left:1684px;top:376px">aiXcoder</div>
<svg class="a" style="left:1687px;top:441px" width="12" height="14"><ellipse cx="6" cy="7" rx="5.500" ry="7" fill="#8c8c8c"/><path d="M3 1v12M6 0v14M9 1v12" stroke="#d8d8d8"/></svg>
<div class="v" style="left:1684px;top:458px">Database</div>
<svg class="a" style="left:1685px;top:527px" width="16" height="16"><circle cx="8" cy="8" r="7" fill="#a8d4f8" stroke="#4a9ef0" stroke-width="1.500"/><path d="M2 10c4 2 8 0 12-3" stroke="#4a9ef0" stroke-width="1.500" fill="none"/></svg>
<div class="v" style="left:1684px;top:548px">RestServices</div>
<div class="b" style="left:1686px;top:713px;width:11px;height:12px;background:#8c8c8c;border:2px solid #aaa"></div>
<div class="v" style="left:1684px;top:730px">Word Book</div>

<!-- bottom tool tabs -->
<div class="b" style="left:217px;top:800px;width:1486px;height:21px;background:#f2f2f2;border-top:1px solid #cfcfcf;border-bottom:1px solid #bcbcbc"></div>
<div class="b" style="left:237px;top:800px;width:69px;height:21px;background:#c2c2c2"></div>
<svg class="a" style="left:249px;top:806px" width="8" height="12"><path d="M0 0l8 6-8 6z" fill="#6e6e6e"/></svg>
<div class="t" style="left:264px;top:803px"><u>4</u>: Run</div>
<svg class="a" style="left:318px;top:806px" width="11" height="11"><path d="M0 1h11M0 4h11M0 7h11M0 10h11" stroke="#6e6e6e" stroke-width="1.300" stroke-dasharray="2 1 8 0"/></svg>
<div class="t" style="left:333px;top:803px"><u>6</u>: TODO</div>
<svg class="a" style="left:396px;top:806px" width="12" height="12"><path d="M11 0C5 0 0 2 1 11c6 1 10-3 10-11z" fill="#6e6e6e"/></svg>
<div class="t" style="left:413px;top:803px">Spring</div>
<div class="b" style="left:467px;top:806px;width:11px;height:11px;background:#6e6e6e;color:#fff;font:7px/11px 'Liberation Mono';text-align:center">&gt;_</div>
<div class="t" style="left:483px;top:803px">Terminal</div>
<svg class="a" style="left:550px;top:806px" width="11" height="11"><path d="M0 1h10M0 5h7M0 9h10" stroke="#6e6e6e" stroke-width="1.800"/></svg>
<div class="t" style="left:566px;top:803px"><u>0</u>: Messages</div>
<svg class="a" style="left:1602px;top:806px" width="13" height="13"><path d="M11 2H6.500a5.500 5.500 0 000 11H11" fill="none" stroke="#8c8c8c" stroke-width="1.300"/></svg>
<div class="t" style="left:1620px;top:803px;font-size:12px">Event Log</div>

<!-- status bar -->
<div class="b" style="left:217px;top:821px;width:1486px;height:21px;background:#f2f2f2"></div>
<svg class="a" style="left:226px;top:826px" width="13" height="13"><rect x=".5" y=".5" width="9" height="9" fill="none" stroke="#aaa"/><rect x="3.500" y="3.500" width="9" height="9" fill="#f2f2f2" stroke="#8c8c8c"/></svg>
<div class="t" style="left:247px;top:823px;font-size:12.4px">Tests passed: 1 (2 minutes ago)</div>
<div class="b" style="left:1400px;top:826px;width:13px;height:13px;background:#3fcda0;border-radius:2px;color:#fff;font:7px/13px 'Liberation Mono';text-align:center">&gt;_</div>
<div class="t" style="left:1424px;top:823px;font-size:12.4px">37:31</div>
<div class="t" style="left:1465px;top:823px;font-size:12.4px">CRLF</div><div class="t" style="left:1497px;top:823px;font-size:8px;color:#555">⬍</div>
<div class="t" style="left:1513px;top:823px;font-size:12.4px">UTF-8</div><div class="t" style="left:1550px;top:823px;font-size:8px;color:#555">⬍</div>
<div class="t" style="left:1566px;top:823px;font-size:12.4px">4 spaces</div><div class="t" style="left:1618px;top:823px;font-size:8px;color:#555">⬍</div>
<svg class="a" style="left:1636px;top:825px" width="13" height="14"><path d="M1 6V3a3 3 0 016 0" fill="none" stroke="#6e6e6e" stroke-width="1.300"/><rect x="4" y="6" width="8" height="8" fill="#6e6e6e"/></svg>
<svg class="a" style="left:1660px;top:824px" width="14" height="16"><circle cx="7" cy="5" r="4" fill="none" stroke="#7c7c7c" stroke-width="1.500"/><rect x="3" y="9" width="8" height="6" fill="none" stroke="#7c7c7c" stroke-width="1.500"/><path d="M0 4h14" stroke="#7c7c7c" stroke-width="1.500"/></svg>
<div class="t" style="left:1685px;top:822px;color:#cc1f2e;font-weight:bold;font-style:italic;font-size:16px">y</div>

<!-- image bottom strip -->
<div class="b" style="left:217px;top:842px;width:1486px;height:7px;background:#1f4a50"></div>
<div class="b" style="left:264px;top:842px;width:332px;height:7px;background:#fff"></div>
<div class="b" style="left:1698px;top:842px;width:1px;height:7px;background:#d0d8d8"></div>
<div class="b" style="left:488px;top:849px;width:16px;height:7px;background:#0c1c38;border-radius:0 0 8px 8px"></div>
<div class="b" style="left:1390px;top:849px;width:16px;height:7px;background:#0c1c38;border-radius:0 0 8px 8px"></div>

<!-- red boxes -->
<div class="b" style="left:242px;top:245px;width:280px;height:22px;border:3px solid #ee2a24;border-radius:4px"></div>
<div class="b" style="left:1144px;top:111px;width:159px;height:41px;border:3px solid #ee2a24;border-radius:3px"></div>

<!-- viewer toolbar -->
<div class="b" style="left:691px;top:808px;width:538px;height:60px;background:rgba(0,0,0,.74);border-radius:10px"></div>
<svg class="a" style="left:727px;top:828px" width="13" height="21"><path d="M11 1.500L2.500 10.500l8.500 9" fill="none" stroke="#f0f0f0" stroke-width="2"/></svg>
<div class="t" style="left:767px;top:828px;color:#e8e8e8;font-size:18px">46/48</div>
<svg class="a" style="left:840px;top:828px" width="13" height="21"><path d="M2 1.500l8.500 9-8.500 9" fill="none" stroke="#f0f0f0" stroke-width="2"/></svg>
<div class="b" style="left:888px;top:826px;width:1px;height:24px;background:#555"></div>
<svg class="a" style="left:920px;top:827px" width="22" height="22"><circle cx="10" cy="9.500" r="8.500" fill="none" stroke="#f0f0f0" stroke-width="1.800"/><path d="M6 9.500h8M16 16l5 5" stroke="#f0f0f0" stroke-width="1.800"/></svg>
<div class="t" style="left:971px;top:828px;color:#e8e8e8;font-size:18px">93%</div>
<svg class="a" style="left:1035px;top:827px" width="22" height="22"><circle cx="10" cy="9.500" r="8.500" fill="none" stroke="#f0f0f0" stroke-width="1.800"/><path d="M6 9.500h8M10 5.500v8M16 16l5 5" stroke="#f0f0f0" stroke-width="1.800"/></svg>
<div class="b" style="left:1091px;top:829px;width:20px;height:18px;border:2px solid #f0f0f0;border-radius:1px;color:#f0f0f0;font:bold 9.500px/14px 'Liberation Sans';text-align:center">1:1</div>
<div class="b" style="left:1143px;top:826px;width:1px;height:24px;background:#555"></div>
<svg class="a" style="left:1175px;top:827px" width="20" height="22"><rect x="1" y="9" width="12" height="12" fill="none" stroke="#f0f0f0" stroke-width="2"/><path d="M7 5a8 6 0 0111 3M15 1l3.500 4L14 6.500" fill="none" stroke="#f0f0f0" stroke-width="1.800" stroke-linejoin="round"/></svg>

<!-- close -->
<div class="b" style="left:1840px;top:21px;width:60px;height:60px;border-radius:50%;background:rgba(0,0,0,.72)"></div>
<svg class="a" style="left:1862px;top:43px" width="16" height="16"><path d="M1 1l14 14M15 1L1 15" stroke="#fff" stroke-width="2"/></svg>
</body></html>
